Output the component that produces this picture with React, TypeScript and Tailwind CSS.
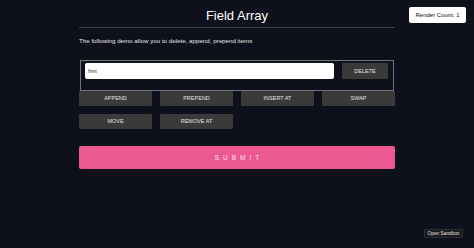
import React from "react";

const btn =
  "h-[15px] bg-[#3a3a3a] text-[#e2e2e2] text-[5.5px] uppercase flex items-center justify-center rounded-[1px]";

export default function App() {
  return (
    <div className="relative w-[474px] h-[248px] overflow-hidden bg-[#0e101c] font-['Liberation_Sans',Arial,sans-serif]">
      <div className="absolute top-[7px] right-[8px] h-[16px] w-[57px] bg-white rounded-[2px] flex items-center justify-center text-[6px] text-[#111]">
        Render Count: 1
      </div>
      <div className="mx-auto w-[316px] flex flex-col">
        <h1 className="pt-[8px] pb-[3px] text-[13px] leading-[16px] text-center text-white border-b border-[#3a3d4a]">
          Field Array
        </h1>
        <p className="mt-[9px] text-[6.2px] leading-[8px] text-[#e6e6e6]">
          The following demo allow you to delete, append, prepend items
        </p>
        <ul className="mt-[15px] mx-[1px] border border-[#70737e] pl-[4px] pr-[5px] pt-[2px] pb-[11px]">
          <li className="flex gap-[8px]">
            <input
              readOnly
              value="first"
              className="flex-1 h-[16px] bg-white rounded-[2px] px-[3px] text-[5.5px] text-[#333] outline-none"
            />
            <button className="w-[46px] h-[16px] bg-[#3a3a3a] text-[#e2e2e2] text-[5.5px] flex items-center justify-center rounded-[1px]">
              DELETE
            </button>
          </li>
        </ul>
        <div className="grid grid-cols-4 gap-x-[8px] gap-y-[8px]">
          <button className={btn}>Append</button>
          <button className={btn}>Prepend</button>
          <button className={btn}>Insert at</button>
          <button className={btn}>Swap</button>
          <button className={btn}>Move</button>
          <button className={btn}>Remove at</button>
        </div>
        <button className="mt-[17px] h-[23px] bg-[#ec5990] rounded-[2px] text-[#fde3ec] text-[6.5px] tracking-[4px] flex items-center justify-center pl-[4px]">
          SUBMIT
        </button>
      </div>
      <div className="absolute bottom-[10px] right-[11px] h-[9px] w-[39px] bg-[#1b1b1f] border border-[#2c2c33] rounded-[1px] flex items-center justify-center text-[4.8px] text-[#e0e0e0]">
        Open Sandbox
      </div>
    </div>
  );
}
